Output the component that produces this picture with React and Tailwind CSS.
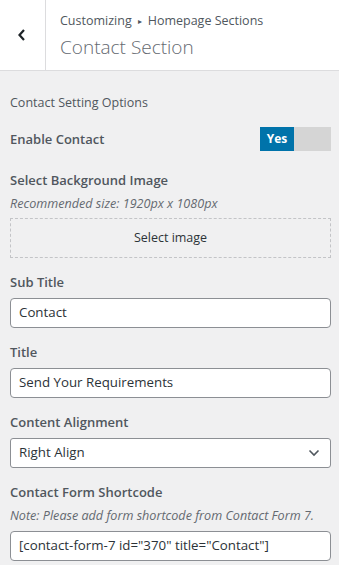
import React from 'react';

const Label = ({ children, className = '' }) => (
  <div className={`text-[13px] leading-[20px] font-semibold text-[#50575e] ${className}`}>{children}</div>
);

const TextInput = ({ value }) => (
  <div className="h-[30px] border border-[#8c8f94] rounded-[4px] bg-white px-[8px] flex items-center text-[13.3px] text-[#2c3338]">
    {value}
  </div>
);

const App = () => {
  return (
    <div
      className="w-[339px] h-[565px] bg-[#f0f0f1] overflow-hidden"
      style={{ fontFamily: '"Open Sans", "Noto Sans", sans-serif' }}
    >
      {/* header */}
      <div className="h-[71px] bg-white border-b border-[#dcdcde] flex">
        <div className="w-[46px] border-r border-[#dcdcde] flex items-center justify-center">
          <svg width="10" height="14" viewBox="0 0 10 14" className="ml-[-2px]">
            <path d="M7 2 L2.5 7 L7 12" fill="none" stroke="#1d2327" strokeWidth="2.2" />
          </svg>
        </div>
        <div className="pl-[14px] pt-[11px]">
          <div className="text-[12.5px] leading-[20px] text-[#50575e] flex items-center gap-[6px]">
            <span>Customizing</span>
            <span className="text-[8px] text-[#50575e]">▸</span>
            <span>Homepage Sections</span>
          </div>
          <div className="text-[19px] leading-[26px] font-light text-[#646970] mt-[3px]">Contact Section</div>
        </div>
      </div>

      <div className="pl-[10px] pr-[8px]">
        <div className="mt-[22px] text-[12.5px] leading-[20px] text-[#50575e]">Contact Setting Options</div>

        <div className="mt-[14px] flex items-center justify-between h-[24px]">
          <Label>Enable Contact</Label>
          <div className="flex w-[71px] h-[24px]">
            <div className="w-[34px] bg-[#0073aa] text-white text-[12px] font-bold flex items-center justify-center">Yes</div>
            <div className="flex-1 bg-[#d5d5d5]"></div>
          </div>
        </div>

        <Label className="mt-[19px]">Select Background Image</Label>
        <div className="mt-[5px] text-[12.6px] leading-[18px] italic text-[#646970]">Recommended size: 1920px x 1080px</div>
        <div className="mt-[5px] h-[40px] border border-dashed border-[#c3c4c7] flex items-center justify-center text-[12.5px] text-[#2c3338]">
          Select image
        </div>

        <Label className="mt-[14px]">Sub Title</Label>
        <div className="mt-[6px]">
          <TextInput value="Contact" />
        </div>

        <Label className="mt-[14px]">Title</Label>
        <div className="mt-[6px]">
          <TextInput value="Send Your Requirements" />
        </div>

        <Label className="mt-[14px]">Content Alignment</Label>
        <div className="mt-[6px] h-[30px] border border-[#8c8f94] rounded-[3px] bg-white pl-[8px] pr-[10px] flex items-center justify-between text-[13.3px] text-[#2c3338]">
          <span>Right Align</span>
          <svg width="12" height="8" viewBox="0 0 12 8">
            <path d="M1.5 1.5 L6 6 L10.5 1.5" fill="none" stroke="#50575e" strokeWidth="1.6" />
          </svg>
        </div>

        <Label className="mt-[14px]">Contact Form Shortcode</Label>
        <div className="mt-[5px] text-[12.6px] leading-[18px] italic text-[#646970]">Note: Please add form shortcode from Contact Form 7.</div>
        <div className="mt-[6px]">
          <TextInput value={'[contact-form-7 id="370" title="Contact"]'} />
        </div>
      </div>
    </div>
  );
};

export default App;
